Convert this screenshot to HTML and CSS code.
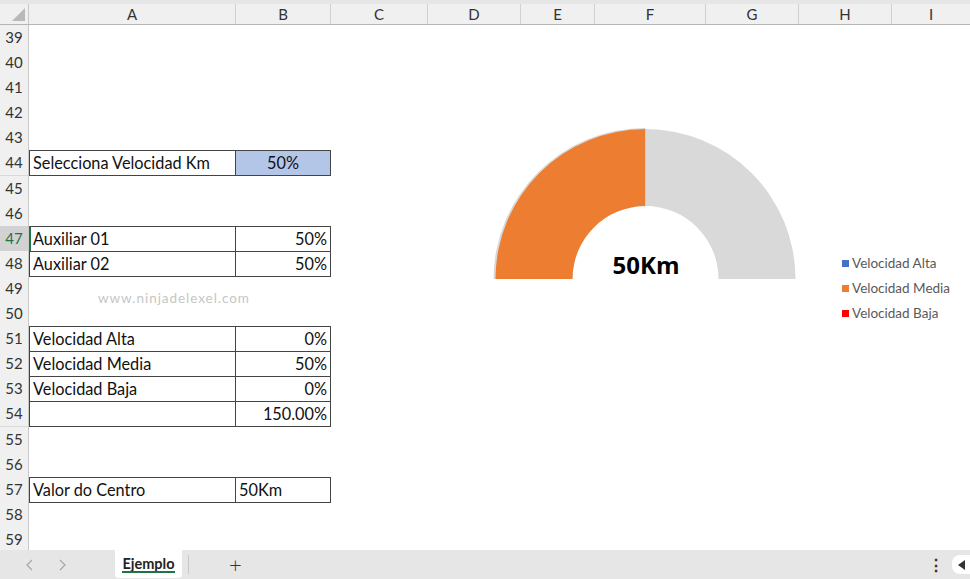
FILE: index.html
```html
<!DOCTYPE html>
<html lang="es">
<head>
    <meta charset="UTF-8">
    <meta name="viewport" content="width=device-width, initial-scale=1.0">
    <title>Ejemplo - Velocímetro</title>
    <link rel="stylesheet" href="styles.css">
</head>
<body>
    <div class="app">
        <div class="topstrip"></div>

        <div class="colhead">
            <div class="corner"></div>
            <div class="ch w-a">A</div>
            <div class="ch w-b">B</div>
            <div class="ch w-c">C</div>
            <div class="ch w-d">D</div>
            <div class="ch w-e">E</div>
            <div class="ch w-f">F</div>
            <div class="ch w-g">G</div>
            <div class="ch w-h">H</div>
            <div class="ch w-i">I</div>
        </div>

        <div class="sheet">
            <div class="row"><div class="rh">39</div><div class="c"></div><div class="c"></div></div>
            <div class="row"><div class="rh">40</div><div class="c"></div><div class="c"></div></div>
            <div class="row"><div class="rh">41</div><div class="c"></div><div class="c"></div></div>
            <div class="row"><div class="rh">42</div><div class="c"></div><div class="c"></div></div>
            <div class="row"><div class="rh">43</div><div class="c"></div><div class="c"></div></div>
            <div class="row"><div class="rh">44</div><div class="c bd bl bt">Selecciona Velocidad Km</div><div class="c bd bt center fill">50%</div></div>
            <div class="row"><div class="rh">45</div><div class="c"></div><div class="c"></div></div>
            <div class="row"><div class="rh">46</div><div class="c"></div><div class="c"></div></div>
            <div class="row"><div class="rh active">47</div><div class="c bd bl bt sel">Auxiliar 01</div><div class="c bd bt num">50%</div></div>
            <div class="row"><div class="rh">48</div><div class="c bd bl">Auxiliar 02</div><div class="c bd num">50%</div></div>
            <div class="row"><div class="rh">49</div><div class="c"></div><div class="c"></div></div>
            <div class="row"><div class="rh">50</div><div class="c"></div><div class="c"></div></div>
            <div class="row"><div class="rh">51</div><div class="c bd bl bt">Velocidad Alta</div><div class="c bd bt num">0%</div></div>
            <div class="row"><div class="rh">52</div><div class="c bd bl">Velocidad Media</div><div class="c bd num">50%</div></div>
            <div class="row"><div class="rh">53</div><div class="c bd bl">Velocidad Baja</div><div class="c bd num">0%</div></div>
            <div class="row"><div class="rh">54</div><div class="c bd bl"></div><div class="c bd num">150.00%</div></div>
            <div class="row"><div class="rh">55</div><div class="c"></div><div class="c"></div></div>
            <div class="row"><div class="rh">56</div><div class="c"></div><div class="c"></div></div>
            <div class="row"><div class="rh">57</div><div class="c bd bl bt">Valor do Centro</div><div class="c bd bt">50Km</div></div>
            <div class="row"><div class="rh">58</div><div class="c"></div><div class="c"></div></div>
            <div class="row"><div class="rh">59</div><div class="c"></div><div class="c"></div></div>

            <div class="watermark">www.ninjadelexel.com</div>

            <div class="chart">
                <svg class="gauge" width="330" height="190" viewBox="0 0 330 190">
                    <!-- thin grey edge behind the orange slice -->
                    <path d="M 13.5 169 A 151.5 151.5 0 0 1 165.5 18 L 165.5 96 A 73 73 0 0 0 92.5 169 Z" fill="#d9d9d9"/>
                    <path d="M 15.5 169 A 150 150 0 0 1 165.5 19 L 165.5 96 A 73 73 0 0 0 92.5 169 Z" fill="#ed7d31"/>
                    <path d="M 165.5 19 A 150 150 0 0 1 315.5 169 L 238.5 169 A 73 73 0 0 0 165.5 96 Z" fill="#d9d9d9"/>
                    <text x="166" y="164" class="gauge-label" text-anchor="middle">50Km</text>
                </svg>
                <ul class="legend">
                    <li><span class="sw sw-alta"></span>Velocidad Alta</li>
                    <li><span class="sw sw-media"></span>Velocidad Media</li>
                    <li><span class="sw sw-baja"></span>Velocidad Baja</li>
                </ul>
            </div>
        </div>

        <div class="tabs">
            <div class="nav">
                <svg class="arrow" width="7" height="12" viewBox="0 0 7 12"><path d="M6 1 L1 6 L6 11" fill="none" stroke="#a6a6a6" stroke-width="1.2"/></svg>
                <svg class="arrow" width="7" height="12" viewBox="0 0 7 12"><path d="M1 1 L6 6 L1 11" fill="none" stroke="#a6a6a6" stroke-width="1.2"/></svg>
            </div>
            <div class="tab">Ejemplo</div>
            <div class="sep"></div>
            <div class="add">+</div>
            <div class="spacer"></div>
            <div class="more">&#8942;</div>
            <div class="scroll-btn">
                <svg width="8" height="10" viewBox="0 0 8 10"><path d="M7 0 L7 10 L0 5 Z" fill="#333"/></svg>
            </div>
        </div>
    </div>
</body>
</html>
```

FILE: styles.css
```css
body {
    margin: 0;
    font-family: Lato, "Noto Sans", sans-serif;
    background-color: #fff;
    overflow: hidden;
}
.app {
    width: 970px;
    height: 579px;
    display: flex;
    flex-direction: column;
}
.topstrip {
    flex-shrink: 0;
    height: 4px;
    background-color: #e6e6e6;
}

/* column header */
.colhead {
    flex-shrink: 0;
    display: flex;
    height: 21px;
    background-color: #f0f0f0;
    border-bottom: 1px solid #b5b5b5;
    box-sizing: border-box;
}
.corner {
    width: 29px;
    position: relative;
    border-right: 1px solid #c8c8c8;
    box-sizing: border-box;
}
.corner::after {
    content: "";
    position: absolute;
    right: 3px;
    bottom: 3px;
    border-left: 13px solid transparent;
    border-bottom: 13px solid #b9b9b9;
}
.ch {
    border-right: 1px solid #d0d0d0;
    box-sizing: border-box;
    text-align: center;
    font-size: 15px;
    line-height: 20px;
    color: #333;
}
.w-a { width: 207px; }
.w-b { width: 95px; }
.w-c { width: 97px; }
.w-d { width: 93px; }
.w-e { width: 74px; }
.w-f { width: 111px; }
.w-g { width: 93px; }
.w-h { width: 93px; }
.w-i { flex: 1; border-right: none; }

/* grid of cells */
.sheet {
    position: relative;
    flex: 1;
    min-height: 0;
    overflow: hidden;
}
.row {
    display: grid;
    grid-template-columns: 29px 207px 95px;
    height: 25.1px;
}
.rh {
    background-color: #f0f0f0;
    border-right: 1px solid #c8c8c8;
    border-bottom: 1px solid #d9d9d9;
    box-sizing: border-box;
    text-align: center;
    font-size: 15px;
    line-height: 25px;
    color: #333;
}
.rh.active {
    background-color: #d2d2d2;
    color: #217346;
}
.c {
    box-sizing: border-box;
    padding: 0 3px 0 3px;
    font-size: 16.3px;
    line-height: 25px;
    color: #111;
    white-space: nowrap;
}
.bd {
    border-right: 1px solid #444;
    border-bottom: 1px solid #444;
}
.bl { border-left: 1px solid #444; }
.bt { border-top: 1px solid #444; line-height: 24px; }
.sel { border-left: 2px solid #217346; padding-left: 2px; }
.num { text-align: right; }
.center { text-align: center; }
.fill { background-color: #b4c6e7; }

.watermark {
    position: absolute;
    left: 98px;
    top: 265px;
    font-size: 13.5px;
    letter-spacing: 0.95px;
    color: #c6c6c6;
}

/* chart */
.chart {
    position: absolute;
    left: 480px;
    top: 85px;
    display: flex;
}
.gauge-label {
    font-family: "Open Sans", sans-serif;
    font-weight: 700;
    font-size: 24px;
    fill: #000;
}
.legend {
    list-style: none;
    margin: 144px 0 0 32px;
    padding: 0;
    display: flex;
    flex-direction: column;
    gap: 7px;
}
.legend li {
    display: flex;
    align-items: center;
    gap: 3px;
    font-size: 13.5px;
    line-height: 18px;
    color: #595959;
}
.sw {
    width: 7px;
    height: 7px;
}
.sw-alta { background-color: #4472c4; }
.sw-media { background-color: #ed7d31; }
.sw-baja { background-color: #ff0000; }

/* sheet tabs */
.tabs {
    flex-shrink: 0;
    height: 29px;
    background-color: #e6e6e6;
    display: flex;
    align-items: stretch;
}
.nav {
    width: 115px;
    display: flex;
    gap: 26px;
    padding-left: 26px;
    box-sizing: border-box;
    align-items: center;
}
.tab {
    width: 67px;
    background-color: #fff;
    border-radius: 0 0 4px 4px;
    margin-bottom: 1px;
    text-align: center;
    font-size: 14.5px;
    font-weight: 700;
    color: #222;
    line-height: 27px;
    position: relative;
}
.tab::after {
    content: "";
    position: absolute;
    left: 7px;
    right: 7px;
    bottom: 5px;
    height: 2px;
    background-color: #217346;
}
.sep {
    width: 1px;
    margin: 5px 0 5px 6px;
    background-color: #c8c8c8;
}
.add {
    margin-left: 40px;
    font-size: 22px;
    font-weight: 300;
    line-height: 29px;
    color: #333;
}
.spacer { flex: 1; }
.more {
    font-size: 16px;
    line-height: 29px;
    color: #333;
    font-weight: 700;
    margin-right: 8px;
}
.scroll-btn {
    width: 16px;
    margin: 5px 0;
    background-color: #fff;
    border-radius: 8px 0 0 8px;
    display: flex;
    align-items: center;
    justify-content: center;
    padding-left: 2px;
}
```
